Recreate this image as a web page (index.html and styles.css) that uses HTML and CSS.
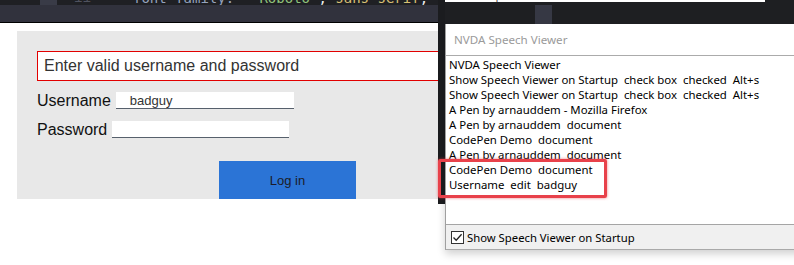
FILE: index.html
```html
<!DOCTYPE html>
<html lang="en">
<head>
    <meta charset="UTF-8">
    <title>Login with NVDA Speech Viewer</title>
    <link rel="stylesheet" href="styles.css">
</head>
<body>
    <div class="editor">
        <div class="editor-code">
            <span class="gutter"></span>
            <span class="ln">11</span>
            <pre class="code-line"><span class="prop">font-family:</span>  <span class="str">'Roboto'</span><span class="punc">,</span> <span class="kw">sans-serif</span><span class="punc">,</span></pre>
        </div>
        <div class="editor-tabs"></div>
    </div>

    <div class="page">
        <div class="panel">
            <div class="error-box">Enter valid username and password</div>
            <div class="field">
                <label for="user">Username</label>
                <div class="input user-input" id="user">badguy</div>
            </div>
            <div class="field">
                <label for="pass">Password</label>
                <div class="input pass-input" id="pass"></div>
            </div>
            <button class="btn-login">Log in</button>
        </div>
    </div>

    <div class="editor-edge"></div>

    <div class="behind-window">
        <div class="behind-title"><span>NVDA Speech Viewer</span></div>
        <div class="behind-patch"></div>
    </div>

    <div class="nvda-window">
        <div class="nvda-title">NVDA Speech Viewer</div>
        <div class="nvda-list">
            <div class="line">NVDA Speech Viewer</div>
            <div class="line">Show Speech Viewer on Startup  check box  checked  Alt+s</div>
            <div class="line">Show Speech Viewer on Startup  check box  checked  Alt+s</div>
            <div class="line">A Pen by arnauddem - Mozilla Firefox</div>
            <div class="line">A Pen by arnauddem  document</div>
            <div class="line">CodePen Demo  document</div>
            <div class="line">A Pen by arnauddem  document</div>
            <div class="line">CodePen Demo  document</div>
            <div class="line">Username  edit  badguy</div>
        </div>
        <div class="nvda-footer">
            <span class="checkbox">
                <svg width="13" height="13" viewBox="0 0 13 13">
                    <rect x="0.5" y="0.5" width="12" height="12" fill="#fff" stroke="#333"/>
                    <path d="M2.5 6.5 L5.2 9.3 L10.6 3.2" fill="none" stroke="#222" stroke-width="1.3"/>
                </svg>
            </span>
            <span>Show Speech Viewer on Startup</span>
        </div>
    </div>

    <div class="highlight"></div>
</body>
</html>
```

FILE: styles.css
```css
body {
    margin: 0;
    width: 794px;
    height: 265px;
    overflow: hidden;
    position: relative;
    background: #fff;
    font-family: "Liberation Sans", Arial, sans-serif;
}
.editor {
    width: 438px;
}
.editor-code {
    position: relative;
    height: 5px;
    overflow: hidden;
    background: #1f2024;
    font-family: "Liberation Mono", monospace;
    font-size: 14px;
    line-height: 14px;
}
.gutter {
    position: absolute;
    left: 40px;
    top: 0;
    width: 17px;
    height: 5px;
    background: #393b47;
}
.ln {
    position: absolute;
    left: 74px;
    top: -9px;
    color: #4f525e;
}
.code-line {
    position: absolute;
    left: 133px;
    top: -9px;
    margin: 0;
    color: #c9d1e0;
}
.prop {
    color: #95a3bd;
}
.str {
    color: #8fc27a;
}
.punc {
    color: #f0f0f0;
}
.kw {
    color: #d8c074;
}
.editor-tabs {
    height: 17px;
    background: #31323d;
    border-bottom: 1px solid #000;
}
.page {
    padding: 8px 0 0 17px;
}
.panel {
    width: 421px;
    height: 168px;
    padding: 20px 0 0 20px;
    box-sizing: border-box;
    background: #e8e8e8;
    overflow: hidden;
}
.error-box {
    width: 420px;
    height: 30px;
    box-sizing: border-box;
    border: 1px solid #e20000;
    background: #fff;
    padding-left: 6px;
    font-size: 16px;
    line-height: 28px;
    color: #333;
}
.field {
    display: flex;
    align-items: center;
    gap: 5px;
    height: 17px;
    margin-top: 11px;
    font-size: 16px;
    color: #111;
}
.field + .field {
    margin-top: 12px;
}
.input {
    height: 17px;
    box-sizing: border-box;
    background: #fff;
    border-bottom: 1px solid #56606c;
    font-size: 13px;
    line-height: 17px;
    color: #333;
}
.user-input {
    width: 178px;
    padding-left: 14px;
}
.pass-input {
    width: 177px;
}
.btn-login {
    display: block;
    margin: 23px 0 0 182px;
    width: 137px;
    height: 42px;
    border: none;
    background: #2b74d6;
    font-family: "Liberation Sans", Arial, sans-serif;
    font-size: 13px;
    color: #1c1c28;
    padding: 0 0 4px;
}
.editor-edge {
    position: absolute;
    left: 438px;
    top: 0;
    width: 8px;
    height: 204px;
    background: #1b1c1f;
}
.behind-window {
    position: absolute;
    left: 445px;
    top: 0;
    width: 349px;
    height: 24px;
    background: #1e1f22;
}
.behind-title {
    width: 320px;
    height: 2px;
    overflow: hidden;
    background: #fff;
    font-family: "Noto Sans", sans-serif;
    font-size: 11.5px;
    color: #555;
}
.behind-title span {
    display: block;
    margin: -13px 0 0 10px;
    line-height: 16px;
}
.behind-patch {
    margin: 3px 0 0 90px;
    width: 17px;
    height: 19px;
    background: #363844;
}
.nvda-window {
    position: absolute;
    left: 445px;
    top: 24px;
    width: 360px;
    border-left: 1px solid #a0a0a0;
    border-bottom: 1px solid #a9a9a9;
    background: #fff;
    font-family: "Noto Sans", sans-serif;
    font-size: 11.4px;
    color: #000;
    box-shadow: 0 4px 8px rgba(0, 0, 0, 0.18);
}
.nvda-title {
    height: 31px;
    line-height: 31px;
    padding-left: 8px;
    font-size: 11.6px;
    color: #9a9a9a;
    border-bottom: 1px solid #ababab;
}
.nvda-list {
    height: 169px;
    padding: 1px 0 0 3px;
    box-sizing: border-box;
    border-bottom: 1px solid #a5a5a5;
}
.line {
    height: 15px;
    line-height: 15px;
    white-space: pre;
}
.nvda-footer {
    height: 24px;
    display: flex;
    align-items: center;
    gap: 3px;
    padding-left: 5px;
    font-size: 11.3px;
    background: #f0f0f0;
}
.checkbox {
    display: flex;
}
.highlight {
    position: absolute;
    left: 438px;
    top: 159px;
    width: 169px;
    height: 39px;
    box-sizing: border-box;
    border: 3px solid #e8414a;
    border-radius: 2px;
    box-shadow: 0 0 3px rgba(232, 65, 74, 0.7);
}
```
